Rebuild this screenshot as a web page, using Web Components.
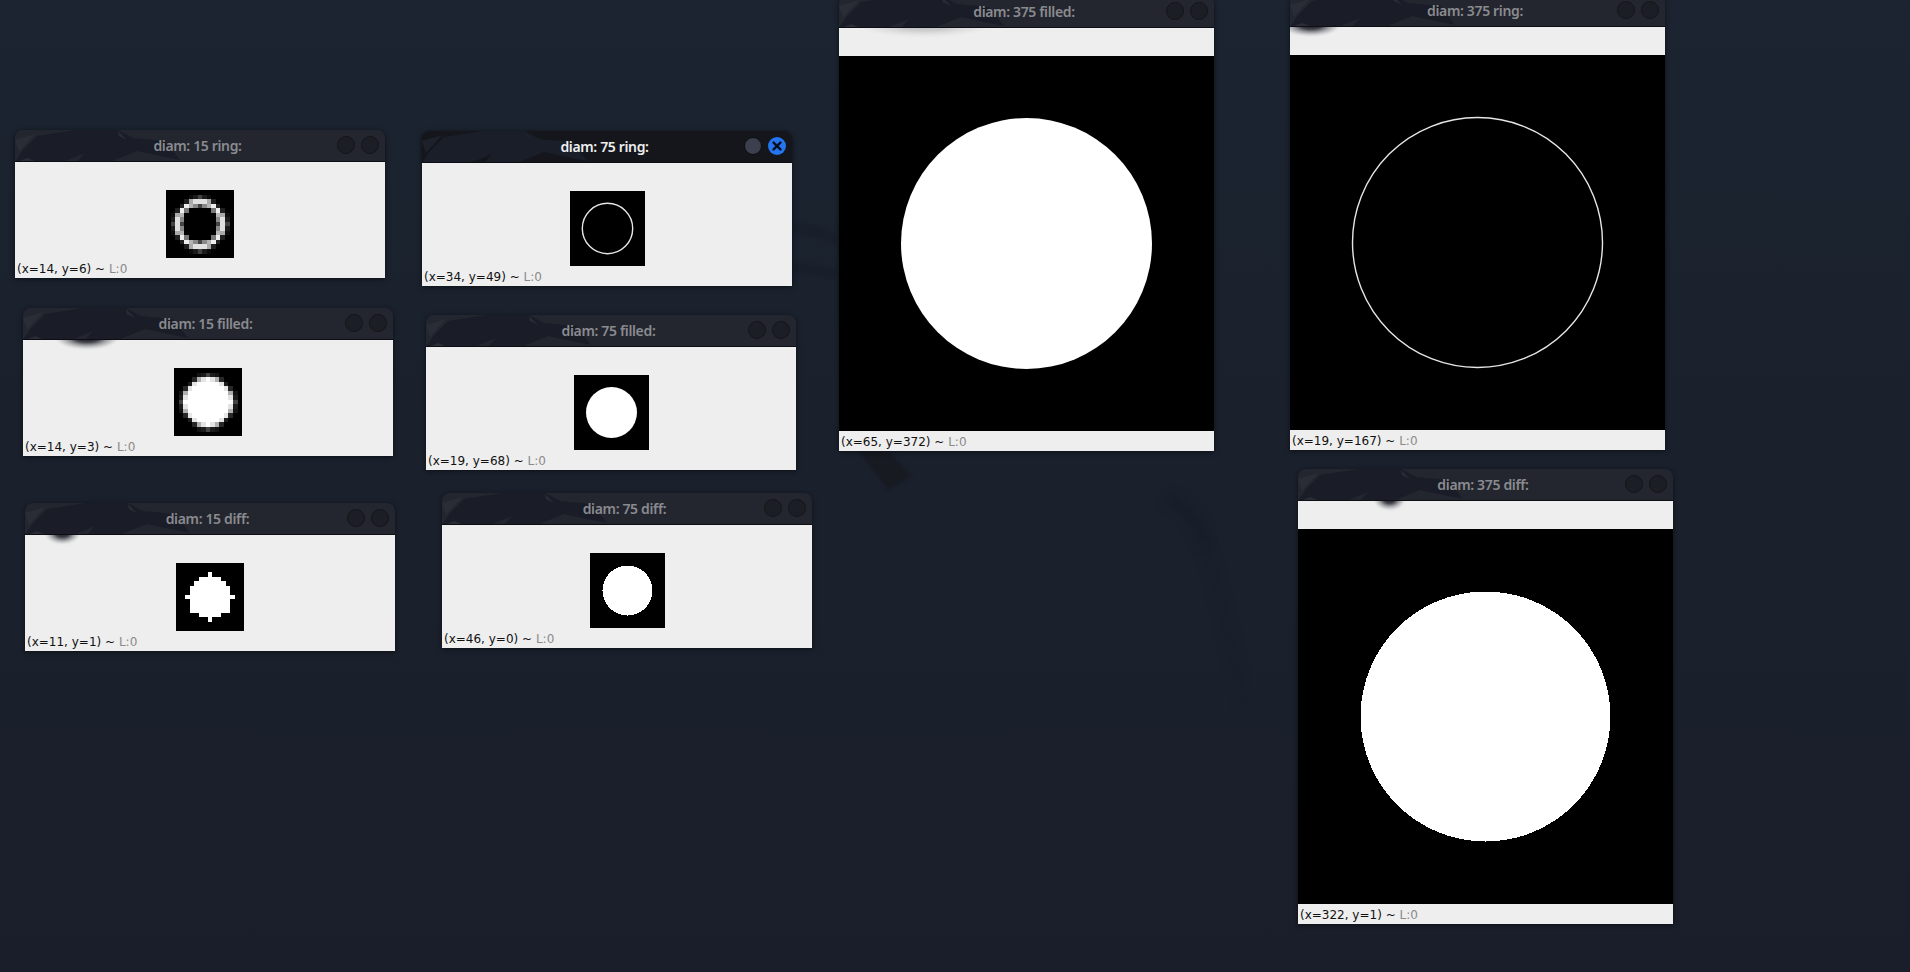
<!DOCTYPE html>
<html lang="en"><head><meta charset="utf-8"><title>Circle windows</title>
<style>html,body{margin:0;height:100%;overflow:hidden;background:#1a1f2b}</style></head>
<body>
<cv-desktop>
  <cv-window left="15" top="130" title="diam: 15 ring:" status="(x=14, y=6)"><cv-pixels kind="ring"></cv-pixels></cv-window>
  <cv-window left="422" top="131" title="diam: 75 ring:" status="(x=34, y=49)" active><cv-circle size="75" r="25.2" ring></cv-circle></cv-window>
  <cv-window left="23" top="308" title="diam: 15 filled:" status="(x=14, y=3)" smudge="33,62"><cv-pixels kind="filled"></cv-pixels></cv-window>
  <cv-window left="426" top="315" title="diam: 75 filled:" status="(x=19, y=68)"><cv-circle size="75" r="25.5"></cv-circle></cv-window>
  <cv-window left="25" top="503" title="diam: 15 diff:" status="(x=11, y=1)" smudge="20,35"><cv-pixels kind="diff"></cv-pixels></cv-window>
  <cv-window left="442" top="493" title="diam: 75 diff:" status="(x=46, y=0)"><cv-circle size="75" r="25" crisp></cv-circle></cv-window>
  <cv-window left="839" top="-4" title="diam: 375 filled:" status="(x=65, y=372)" smudge="20,130" faint><cv-circle size="375" r="125.5"></cv-circle></cv-window>
  <cv-window left="1290" top="-5" title="diam: 375 ring:" status="(x=19, y=167)" smudge="-8,58"><cv-circle size="375" r="125" ring></cv-circle></cv-window>
  <cv-window left="1298" top="469" title="diam: 375 diff:" status="(x=322, y=1)" smudge="76,31"><cv-circle size="375" r="125" crisp></cv-circle></cv-window>
</cv-desktop>
<script>
class CvDesktop extends HTMLElement{
  constructor(){super();this.attachShadow({mode:'open'}).innerHTML=`
  <style>
    :host{display:block;position:relative;width:1910px;height:972px;overflow:hidden;
      background:linear-gradient(180deg,#1b2430 0%,#1a212d 45%,#1a1e2a 100%)}
    svg{position:absolute;inset:0;width:1910px;height:972px}
  </style>
  <svg viewBox="0 0 1910 972" aria-hidden="true">
    <defs><filter id="b" x="-30%" y="-30%" width="160%" height="160%" color-interpolation-filters="sRGB"><feGaussianBlur stdDeviation="5"/></filter>
    <filter id="b2" x="-20%" y="-20%" width="140%" height="140%" color-interpolation-filters="sRGB"><feGaussianBlur stdDeviation="1.5"/></filter></defs>
    <path d="M858 451 L888 451 L912 476 L888 490 Z" fill="#181a22" filter="url(#b2)"/>
    <path d="M1168 498 C1190 510 1200 525 1205 545" fill="none" stroke="#151924" stroke-width="12" stroke-opacity=".5" filter="url(#b)"/>
    <path d="M1205 545 C1222 600 1232 650 1244 710" fill="none" stroke="#171b26" stroke-width="8" stroke-opacity=".3" filter="url(#b)"/>
    <path d="M792 222 C815 226 832 232 839 236 L839 244 L792 232 Z M792 262 L839 270 L839 278 L792 272 Z" fill="#171b25" fill-opacity=".45" filter="url(#b2)"/>
  </svg>
  <slot></slot>`;}
}

class CvWindow extends HTMLElement{
  constructor(){super();this.attachShadow({mode:'open'});}
  connectedCallback(){
    const a=n=>this.getAttribute(n);
    const active=this.hasAttribute('active');
    const sm=a('smudge');
    let smudge='';
    if(sm){const [x,w]=sm.split(',').map(Number);
      smudge=`<span class="smudge" style="left:${x}px;width:${w}px;${this.hasAttribute('faint')?'opacity:.2':''}"></span>`;}
    this.shadowRoot.innerHTML=`
    <style>
      :host{display:flex;flex-direction:column;position:absolute;min-width:370px;left:${a('left')}px;top:${a('top')}px;
        border-radius:8px 8px 0 0;box-shadow:0 1px 5px rgba(0,0,0,.55);
        font-family:"Noto Sans","Open Sans",sans-serif}
      header{position:relative;box-sizing:border-box;height:32px;padding-right:5px;display:flex;align-items:center;justify-content:center;
        background:${active?'#14161c':'#23262f'};border-bottom:1px solid #0d0e13;border-radius:8px 8px 0 0;overflow:hidden;
        color:${active?'#eeeeee':'#8a8b8f'};font-size:14px;font-weight:600;letter-spacing:-.35px}
      header svg.wall{position:absolute;left:0;top:0;width:190px;height:32px}
      header .t{position:relative}
      .btns{position:absolute;right:6px;top:6px;display:flex;gap:6px}
      .btn{box-sizing:border-box;width:18px;height:18px;border-radius:50%;border:1px solid #15161b;background:#1c1e25;display:block}
      .active .btn.min{background:#3b3f4e;border-color:#0d0e13}
      .active .btn.close{background:#2574f0;border:0;display:flex;align-items:center;justify-content:center}
      main{position:relative;background:#eeeeee;padding-top:28px;display:flex;flex-direction:column;align-items:center;overflow:hidden}
      footer{align-self:stretch;box-sizing:border-box;height:20px;padding:2px 0 0 2px;
        font:12px/18px "DejaVu Sans",sans-serif;color:#111;white-space:nowrap}
      footer i{font-style:normal;color:#8a8a8a}
      .smudge{position:absolute;top:-2px;height:11px;background:radial-gradient(ellipse 50% 100% at 50% 0,#2b2e37 0%,#2b2e37 35%,rgba(60,63,72,.45) 65%,rgba(238,238,238,0) 100%);filter:blur(.8px)}
    </style>
    <header class="${active?'active':''}">
      <svg class="wall" viewBox="0 0 190 32" aria-hidden="true">
        <path d="M0 32 L8 20 L22 6 L60 0 L103 0 L118 8 L150 11 L165 30 L150 27 L122 21 L95 32 L62 32 L70 23 L48 32 Z" fill="${active?'#1a1e29':'#1a1d27'}"/>
        <path d="M0 10 L20 4 L4 22 Z M2 32 L12 28 L22 32 Z M103 1 L112 10 L104 6 Z" fill="${active?'#1d212b':'#2a2d36'}"/>
      </svg>
      <span class="t">${a('title')}</span>
      <span class="btns"><span class="btn min"></span><span class="btn close">${active?
        '<svg width="10" height="10" viewBox="0 0 10 10"><path d="M1.6 1.6 L8.4 8.4 M8.4 1.6 L1.6 8.4" stroke="#07101f" stroke-width="2.4" stroke-linecap="round"/></svg>':''}</span></span>
    </header>
    <main>${smudge}<slot></slot><footer>${a('status')} ~ <i>L:0</i></footer></main>`;
  }
}

/* 15×15 sources drawn at 68px with hard pixels. Value is looked up by (min,max) offset from the centre. */
const RING={'0,4':0x44,'1,4':0x88,'2,4':0xb4,'3,3':0x78,'3,4':0xee,'0,5':0xe0,'1,5':0xe0,'2,5':0xaa,'3,5':0x20,'4,4':0x22,'0,6':0x44,'1,6':0x1c,'2,6':0x0c};
const FILL={'0,6':0x44,'1,6':0x1c,'2,6':0x14,'1,5':0xe4,'2,5':0xb0,'3,5':0x28,'3,4':0xe6,'4,4':0x1c};
function diffOn(r,c){
  const up=r<7,dy=Math.abs(r-7),dx=Math.abs(c-7);
  if(dy===0&&dx<=5)return true;
  if(dx===0&&dy<=5)return true;
  const half=up?{0:4,1:4,2:4,3:3,4:2}:{0:4,1:4,2:4,3:4,4:2};
  const row=half[dy];
  return row!==undefined&&dx<=row;
}
class CvPixels extends HTMLElement{
  constructor(){super();this.attachShadow({mode:'open'});}
  connectedCallback(){
    const kind=this.getAttribute('kind');
    let rects='';
    for(let r=0;r<15;r++)for(let c=0;c<15;c++){
      const dy=Math.abs(r-7),dx=Math.abs(c-7),lo=Math.min(dx,dy),hi=Math.max(dx,dy),k=lo+','+hi;
      let v=0;
      if(kind==='ring')v=RING[k]||0;
      else if(kind==='filled'){v=FILL[k];if(v===undefined)v=(dx*dx+dy*dy<=25)?255:0;}
      else v=diffOn(r,c)?255:0;
      if(v)rects+=`<rect x="${c}" y="${r}" width="1.02" height="1.02" fill="rgb(${v},${v},${v})"/>`;
    }
    this.shadowRoot.innerHTML=`<style>:host{display:block;width:68px;height:68px;background:#000}svg{display:block;width:68px;height:68px}</style>
    <svg viewBox="0 0 15 15" shape-rendering="crispEdges" aria-hidden="true">${rects}</svg>`;
  }
}
class CvCircle extends HTMLElement{
  constructor(){super();this.attachShadow({mode:'open'});}
  connectedCallback(){
    const s=+this.getAttribute('size'),r=+this.getAttribute('r'),ring=this.hasAttribute('ring'),crisp=this.hasAttribute('crisp');
    const c=s/2;
    const shape=ring?`<circle cx="${c}" cy="${c}" r="${r}" fill="none" stroke="#e6e6e6" stroke-width="1.4"/>`:`<circle cx="${c}" cy="${c}" r="${r}" fill="#fff"${crisp?' shape-rendering="crispEdges"':''}/>`;
    this.shadowRoot.innerHTML=`<style>:host{display:block;width:${s}px;height:${s}px;background:#000}svg{display:block}</style>
    <svg width="${s}" height="${s}" viewBox="0 0 ${s} ${s}" aria-hidden="true">${shape}</svg>`;
  }
}
customElements.define('cv-desktop',CvDesktop);
customElements.define('cv-window',CvWindow);
customElements.define('cv-pixels',CvPixels);
customElements.define('cv-circle',CvCircle);
</script>
</body></html>
